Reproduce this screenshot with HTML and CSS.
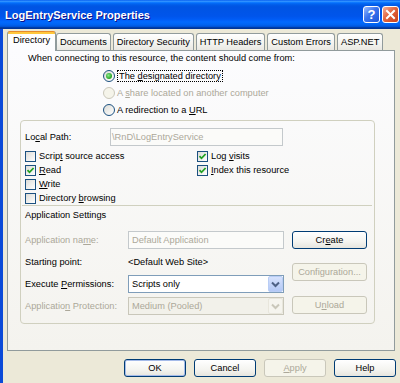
FILE: index.html
```html
<!DOCTYPE html>
<html lang="en">
<head>
    <meta charset="UTF-8">
    <title>LogEntryService Properties</title>
    <link rel="stylesheet" href="styles.css">
</head>
<body>
    <div class="titlebar">
        <span class="title">LogEntryService Properties</span>
        <span class="cap-btn help">?</span>
        <span class="cap-btn close">
            <svg width="11" height="11" viewBox="0 0 11 11"><path d="M2 2 L9 9 M9 2 L2 9" stroke="#fff" stroke-width="2" stroke-linecap="square"/></svg>
        </span>
    </div>

    <div class="frame">
        <div class="tabs">
            <span class="tab active">Directory</span>
            <span class="tab">Documents</span>
            <span class="tab">Directory Security</span>
            <span class="tab">HTTP Headers</span>
            <span class="tab">Custom Errors</span>
            <span class="tab">ASP.NET</span>
        </div>

        <div class="panel">
            <p class="intro">When connecting to this resource, the content should come from:</p>

            <div class="radios">
                <div class="radio-row">
                    <span class="radio checked"></span>
                    <span class="focus">The <u>d</u>esignated directory</span>
                </div>
                <div class="radio-row disabled">
                    <span class="radio"></span>
                    <span>A <u>s</u>hare located on another computer</span>
                </div>
                <div class="radio-row">
                    <span class="radio"></span>
                    <span>A redirection to a <u>U</u>RL</span>
                </div>
            </div>

            <div class="group">
                <div class="path-row">
                    <span class="path-label">Lo<u>c</u>al Path:</span>
                    <span class="edit disabled path">\RnD\LogEntryService</span>
                </div>

                <div class="checks">
                    <div class="check-col left">
                        <div class="check-row"><span class="check"></span><span>Scrip<u>t</u> source access</span></div>
                        <div class="check-row"><span class="check on"><svg width="9" height="9" viewBox="0 0 9 9"><path d="M1.5 4.2 L3.5 6.3 L7.6 2" fill="none" stroke="#21a121" stroke-width="1.8"/></svg></span><span><u>R</u>ead</span></div>
                        <div class="check-row"><span class="check"></span><span><u>W</u>rite</span></div>
                        <div class="check-row"><span class="check"></span><span>Directory <u>b</u>rowsing</span></div>
                    </div>
                    <div class="check-col">
                        <div class="check-row"><span class="check on"><svg width="9" height="9" viewBox="0 0 9 9"><path d="M1.5 4.2 L3.5 6.3 L7.6 2" fill="none" stroke="#21a121" stroke-width="1.8"/></svg></span><span>Log <u>v</u>isits</span></div>
                        <div class="check-row"><span class="check on"><svg width="9" height="9" viewBox="0 0 9 9"><path d="M1.5 4.2 L3.5 6.3 L7.6 2" fill="none" stroke="#21a121" stroke-width="1.8"/></svg></span><span><u>I</u>ndex this resource</span></div>
                    </div>
                </div>

                <div class="separator"></div>
                <div class="section-label">Application Settings</div>

                <div class="app">
                    <div class="app-fields">
                        <div class="app-row">
                            <span class="app-label disabled">Application na<u>m</u>e:</span>
                            <span class="edit disabled field">Default Application</span>
                        </div>
                        <div class="app-row">
                            <span class="app-label">Starting point:</span>
                            <span class="value">&lt;Default Web Site&gt;</span>
                        </div>
                        <div class="app-row">
                            <span class="app-label">Execute <u>P</u>ermissions:</span>
                            <span class="combo field">
                                <span class="combo-text">Scripts only</span>
                                <span class="combo-btn"><svg width="9" height="7" viewBox="0 0 9 7"><path d="M1 1.5 L4.5 5 L8 1.5" fill="none" stroke="#4d6185" stroke-width="2"/></svg></span>
                            </span>
                        </div>
                        <div class="app-row">
                            <span class="app-label disabled">Applicatio<u>n</u> Protection:</span>
                            <span class="combo disabled field">
                                <span class="combo-text">Medium (Pooled)</span>
                                <span class="combo-btn"><svg width="9" height="7" viewBox="0 0 9 7"><path d="M1 1.5 L4.5 5 L8 1.5" fill="none" stroke="#c9c7ba" stroke-width="2"/></svg></span>
                            </span>
                        </div>
                    </div>
                    <div class="app-buttons">
                        <span class="btn create"><span>Cr<u>e</u>ate</span></span>
                        <span class="btn disabled config">Configuration...</span>
                        <span class="btn disabled unload"><span>U<u>n</u>load</span></span>
                    </div>
                </div>
            </div>
        </div>

        <div class="dlg-buttons">
            <span class="btn default">OK</span>
            <span class="btn">Cancel</span>
            <span class="btn disabled"><span><u>A</u>pply</span></span>
            <span class="btn">Help</span>
        </div>
    </div>
</body>
</html>
```

FILE: styles.css
```css
* { margin: 0; padding: 0; box-sizing: border-box; }
body {
    width: 400px;
    height: 383px;
    overflow: hidden;
    font-family: 'Liberation Sans', Arial, sans-serif;
    font-size: 9.25px;
    color: #000;
    background: #ece9d8;
}
u { text-decoration: underline; text-underline-offset: 1px; }

/* title bar */
.titlebar {
    height: 29px;
    display: flex;
    align-items: center;
    padding: 0 1px 0 5px;
    background: linear-gradient(to bottom, #0058ee 0%, #3593ff 4%, #288eff 6%, #127dff 8%, #036ffc 10%, #0262ee 14%, #0057e5 20%, #0054e3 24%, #0055eb 56%, #005bf5 66%, #026afe 76%, #0062ef 86%, #0052d6 92%, #0040ab 94%, #003092 100%);
}
.title {
    flex: 1;
    color: #fff;
    font-weight: bold;
    font-size: 11px;
    text-shadow: 1px 1px #0f1089;
}
.cap-btn {
    width: 17px;
    height: 17px;
    margin-left: 2px;
    border: 1px solid #fff;
    border-radius: 3px;
    display: flex;
    align-items: center;
    justify-content: center;
}
.cap-btn.help {
    background: linear-gradient(135deg, #9bbcff, #3a74ee 45%, #1c55d8);
    color: #fff;
    font-weight: bold;
    font-size: 13px;
}
.cap-btn.close {
    background: linear-gradient(135deg, #f4b09a, #e2643f 45%, #c8401a);
}

/* window body */
.frame {
    height: 354px;
    border-left: 3px solid #0b4ad8;
    padding: 2px 4px 0 4px;
}

.tabs {
    position: relative;
    z-index: 1;
    display: flex;
    align-items: flex-end;
    gap: 2px;
    height: 20px;
    margin-bottom: -1px;
    padding-left: 2px;
}
.tab {
    height: 17px;
    margin-bottom: 1px;
    padding: 1px 3px 0;
    line-height: 15px;
    border: 1px solid #919b9c;
    border-bottom: none;
    border-radius: 3px 3px 0 0;
    background: linear-gradient(#fff, #f3f3ef 60%, #e9e8e2);
    white-space: nowrap;
}
.tab.active {
    z-index: 2;
    height: 20px;
    margin: 0 -2px 0 -2px;
    padding: 0 5px;
    line-height: 17px;
    border-top: 1px solid #e68b2c;
    background: linear-gradient(#ffc83c 0, #ffc83c 2px, #fff 2px, #fcfcfe);
}

.panel {
    height: 301px;
    margin-right: 1px;
    padding: 0 19px 0 12px;
    border: 1px solid #919b9c;
    background: linear-gradient(#fcfcfe, #f4f3ee);
}
.intro {
    margin-left: 8px;
    line-height: 14px;
}

/* radios */
.radios {
    margin: 4px 0 0 83px;
    display: flex;
    flex-direction: column;
    gap: 3px;
}
.radio-row {
    height: 14px;
    display: flex;
    align-items: center;
}
.radio {
    width: 12px;
    height: 12px;
    margin-right: 2px;
    border: 1px solid #1c5180;
    border-radius: 50%;
    background: linear-gradient(135deg, #dcdcd7, #fff);
    display: flex;
    align-items: center;
    justify-content: center;
}
.radio.checked::after {
    content: '';
    width: 6px;
    height: 6px;
    border-radius: 50%;
    background: radial-gradient(circle at 40% 40%, #8de98d, #21a121 70%);
}
.radio-row.disabled { color: #aca899; }
.radio-row.disabled .radio {
    border-color: #cac8bb;
    background: #f5f4ea;
}
.focus {
    padding: 0 1px;
    line-height: 10px;
    border: 1px dotted #000;
}

/* group box */
.group {
    margin-top: 3px;
    padding: 7px 2px 8px 4px;
    border: 1px solid #d0d0bf;
    border-radius: 4px;
}
.path-row {
    height: 18px;
    display: flex;
    align-items: center;
}
.path-label { width: 85px; }
.edit {
    height: 18px;
    padding-left: 3px;
    line-height: 16px;
    border: 1px solid #7f9db9;
    background: #fff;
    white-space: nowrap;
}
.edit.disabled {
    color: #aca899;
    border-color: #c4c9cc;
    background: #fbfbf9;
}
.edit.path { width: 173px; padding-left: 1px; }

.checks {
    margin-top: 3px;
    display: flex;
}
.check-col.left { width: 172px; }
.check-row {
    height: 14px;
    display: flex;
    align-items: center;
}
.check {
    width: 11px;
    height: 11px;
    margin-right: 3px;
    border: 1px solid #1c5180;
    background: linear-gradient(135deg, #dcdcd7, #fff);
    display: flex;
    align-items: center;
    justify-content: center;
}

.separator {
    height: 1px;
    margin-left: -3px;
    background: #d0d0bf;
}
.section-label {
    margin-top: 2px;
    line-height: 14px;
}

.app {
    margin-top: 9px;
    display: flex;
}
.app-fields {
    display: flex;
    flex-direction: column;
    gap: 4px;
}
.app-row {
    height: 18px;
    display: flex;
    align-items: center;
}
.app-label { width: 103px; }
.app-label.disabled { color: #aca899; }
.field { width: 156px; }

.combo {
    height: 18px;
    display: flex;
    align-items: center;
    border: 1px solid #7f9db9;
    background: #fff;
}
.combo-text {
    flex: 1;
    padding-left: 3px;
}
.combo-btn {
    width: 15px;
    height: 16px;
    border: 1px solid #b9cdf5;
    border-radius: 2px;
    background: linear-gradient(#d6e2fd, #b3c8f5);
    display: flex;
    align-items: center;
    justify-content: center;
}
.combo.disabled {
    color: #aca899;
    border-color: #c9c7ba;
    background: #f2f1ea;
}
.combo.disabled .combo-btn {
    border-color: #e8e6dc;
    background: #f5f4ee;
}

.app-buttons {
    width: 75px;
    margin-left: 8px;
    display: flex;
    flex-direction: column;
}
.config { margin-top: 14px; }
.unload { margin-top: 15px; }

/* buttons */
.btn {
    height: 18px;
    display: flex;
    align-items: center;
    justify-content: center;
    border: 1px solid #003c74;
    border-radius: 3px;
    background: linear-gradient(#fff, #f4f4f0 60%, #e6e5de);
    white-space: nowrap;
}
.btn.default { box-shadow: inset 0 0 0 1px #a5bbe9; }
.btn.disabled {
    color: #aca899;
    border-color: #c9c7ba;
    background: #f5f4ea;
}

.dlg-buttons {
    margin-top: 8px;
    display: flex;
    justify-content: flex-end;
    gap: 8px;
}
.dlg-buttons .btn { width: 62px; }
```
